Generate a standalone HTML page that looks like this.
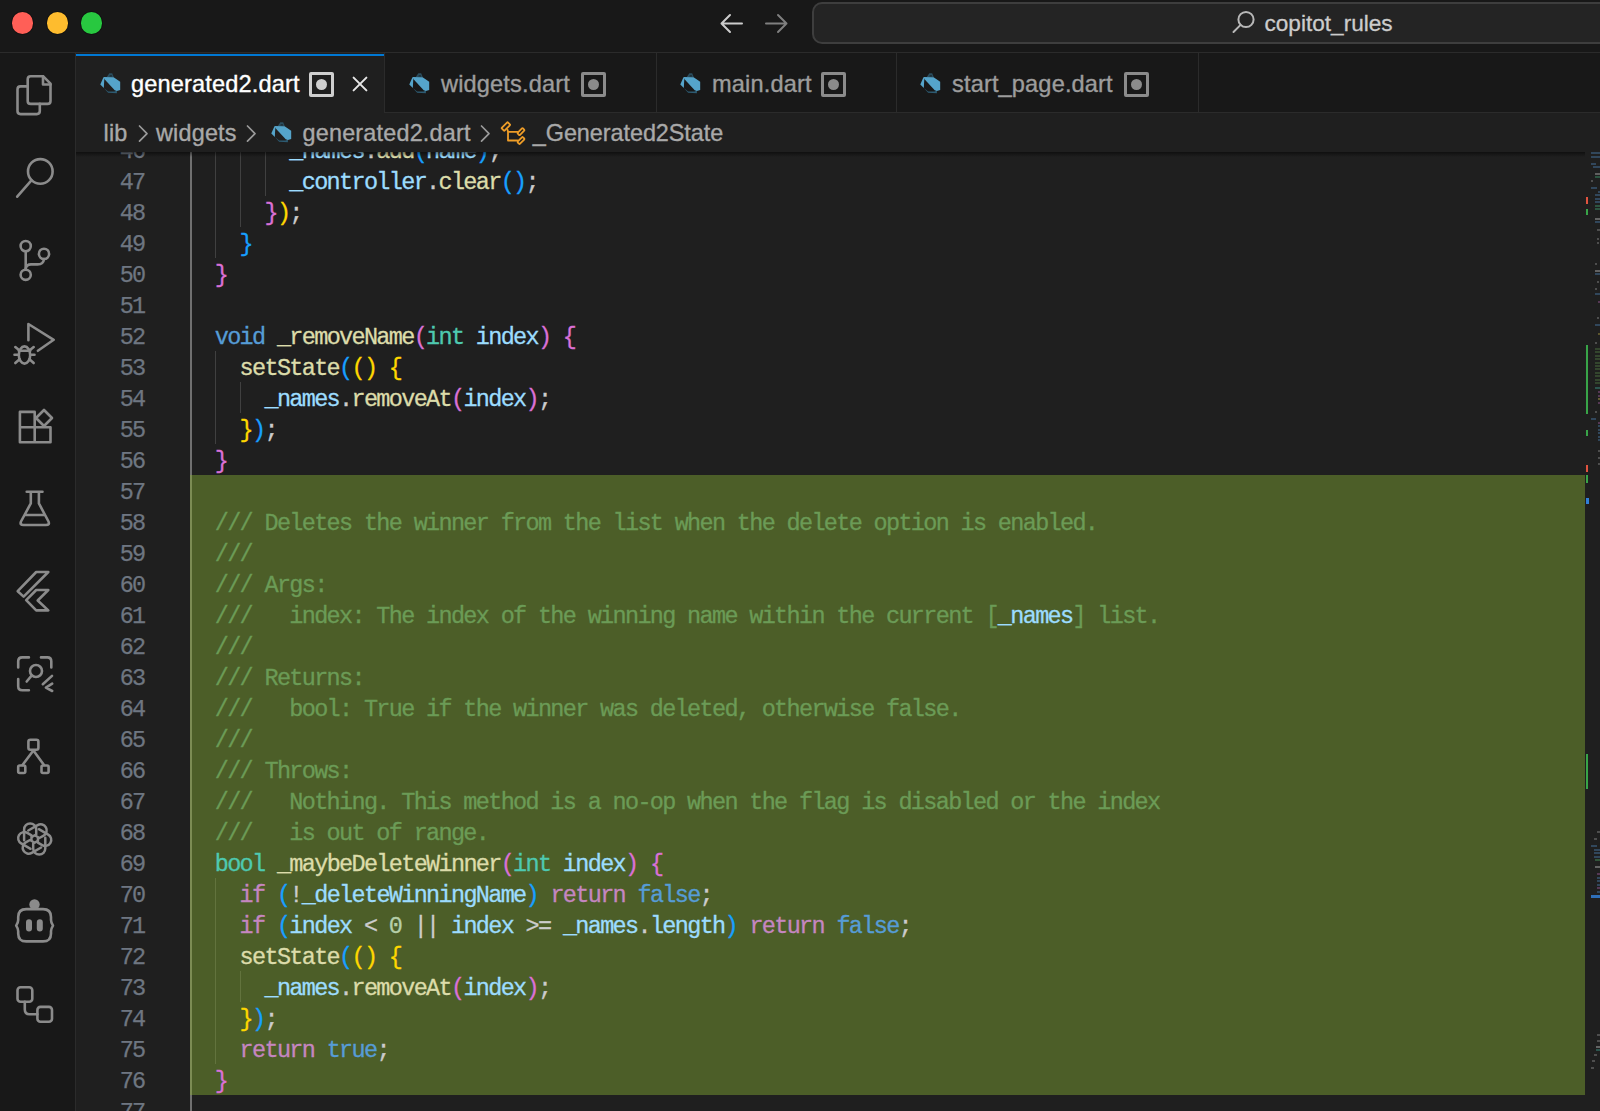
<!DOCTYPE html>
<html><head><meta charset="utf-8"><style>
*{margin:0;padding:0;box-sizing:border-box}
html,body{width:1600px;height:1111px;overflow:hidden;background:#1f1f1f}
body{position:relative;font-family:"Liberation Sans",sans-serif}
.a{position:absolute}
.code{font-family:"Liberation Mono",monospace;font-size:23.50px;letter-spacing:-1.672px;white-space:pre;line-height:31px;height:31px;-webkit-text-stroke:0.3px currentColor}
.ln{font-family:"Liberation Mono",monospace;font-size:23.50px;letter-spacing:-1.672px;white-space:pre;color:#6e7681;text-align:right;width:150px;line-height:31px;height:31px;-webkit-text-stroke:0.25px currentColor}
.kw{color:#569CD6}.ty{color:#4EC9B0}.fn{color:#DCDCAA}.var{color:#9CDCFE}.ctl{color:#C586C0}.p{color:#CCCCCC}
.cm{color:#6A9955}.b1{color:#FFD700}.b2{color:#DA70D6}.b3{color:#179FFF}.num{color:#B5CEA8}
.hl .cm{color:#6b9b56}
.tabt{font-size:23.6px;letter-spacing:0.14px;color:#9d9d9d;white-space:pre;-webkit-text-stroke:0.35px currentColor}
.bc{font-size:23.4px;letter-spacing:0.2px;color:#a9a9a9;white-space:pre;-webkit-text-stroke:0.35px currentColor}
</style></head><body>

<div id="ed"><div class="a" style="left:189.5px;top:475.30px;width:1395.5px;height:619.80px;background:#4c5e28"></div>
<div class="a" style="left:189.50px;top:72.43px;width:2px;height:402.87px;background:#707070"></div>
<div class="a" style="left:189.50px;top:475.30px;width:2px;height:619.80px;background:#7c8c54"></div>
<div class="a" style="left:189.50px;top:1095.10px;width:2px;height:61.98px;background:#707070"></div>
<div class="a" style="left:214.86px;top:72.43px;width:1.5px;height:185.94px;background:#404040"></div>
<div class="a" style="left:239.72px;top:72.43px;width:1.5px;height:154.95px;background:#404040"></div>
<div class="a" style="left:264.58px;top:72.43px;width:1.5px;height:123.96px;background:#404040"></div>
<div class="a" style="left:214.86px;top:351.34px;width:1.5px;height:92.97px;background:#404040"></div>
<div class="a" style="left:239.72px;top:382.33px;width:1.5px;height:30.99px;background:#404040"></div>
<div class="a" style="left:214.86px;top:878.17px;width:1.5px;height:185.94px;background:#62733d"></div>
<div class="a" style="left:239.72px;top:971.14px;width:1.5px;height:30.99px;background:#62733d"></div>
<div class="a ln" style="left:-5.5px;top:104.92px">45</div>
<div class="a ln" style="left:-5.5px;top:135.91px">46</div>
<div class="a code" style="left:289.34px;top:135.91px"><span class="var">_names</span><span class="p">.</span><span class="fn">add</span><span class="b3">(</span><span class="var">name</span><span class="b3">)</span><span class="p">;</span></div>
<div class="a ln" style="left:-5.5px;top:166.90px">47</div>
<div class="a code" style="left:289.34px;top:166.90px"><span class="var">_controller</span><span class="p">.</span><span class="fn">clear</span><span class="b3">()</span><span class="p">;</span></div>
<div class="a ln" style="left:-5.5px;top:197.89px">48</div>
<div class="a code" style="left:264.48px;top:197.89px"><span class="b2">}</span><span class="b1">)</span><span class="p">;</span></div>
<div class="a ln" style="left:-5.5px;top:228.88px">49</div>
<div class="a code" style="left:239.62px;top:228.88px"><span class="b3">}</span></div>
<div class="a ln" style="left:-5.5px;top:259.87px">50</div>
<div class="a code" style="left:214.76px;top:259.87px"><span class="b2">}</span></div>
<div class="a ln" style="left:-5.5px;top:290.86px">51</div>
<div class="a code" style="left:189.90px;top:290.86px"></div>
<div class="a ln" style="left:-5.5px;top:321.85px">52</div>
<div class="a code" style="left:214.76px;top:321.85px"><span class="kw">void</span><span class="p"> </span><span class="fn">_removeName</span><span class="b2">(</span><span class="ty">int</span><span class="p"> </span><span class="var">index</span><span class="b2">)</span><span class="p"> </span><span class="b2">{</span></div>
<div class="a ln" style="left:-5.5px;top:352.84px">53</div>
<div class="a code" style="left:239.62px;top:352.84px"><span class="fn">setState</span><span class="b3">(</span><span class="b1">()</span><span class="p"> </span><span class="b1">{</span></div>
<div class="a ln" style="left:-5.5px;top:383.83px">54</div>
<div class="a code" style="left:264.48px;top:383.83px"><span class="var">_names</span><span class="p">.</span><span class="fn">removeAt</span><span class="b2">(</span><span class="var">index</span><span class="b2">)</span><span class="p">;</span></div>
<div class="a ln" style="left:-5.5px;top:414.82px">55</div>
<div class="a code" style="left:239.62px;top:414.82px"><span class="b1">}</span><span class="b3">)</span><span class="p">;</span></div>
<div class="a ln" style="left:-5.5px;top:445.81px">56</div>
<div class="a code" style="left:214.76px;top:445.81px"><span class="b2">}</span></div>
<div class="a ln" style="left:-5.5px;top:476.80px">57</div>
<div class="a code hl" style="left:189.90px;top:476.80px"></div>
<div class="a ln" style="left:-5.5px;top:507.79px">58</div>
<div class="a code hl" style="left:214.76px;top:507.79px"><span class="cm">/// Deletes the winner from the list when the delete option is enabled.</span></div>
<div class="a ln" style="left:-5.5px;top:538.78px">59</div>
<div class="a code hl" style="left:214.76px;top:538.78px"><span class="cm">///</span></div>
<div class="a ln" style="left:-5.5px;top:569.77px">60</div>
<div class="a code hl" style="left:214.76px;top:569.77px"><span class="cm">/// Args:</span></div>
<div class="a ln" style="left:-5.5px;top:600.76px">61</div>
<div class="a code hl" style="left:214.76px;top:600.76px"><span class="cm">///   index: The index of the winning name within the current [</span><span class="var">_names</span><span class="cm">] list.</span></div>
<div class="a ln" style="left:-5.5px;top:631.75px">62</div>
<div class="a code hl" style="left:214.76px;top:631.75px"><span class="cm">///</span></div>
<div class="a ln" style="left:-5.5px;top:662.74px">63</div>
<div class="a code hl" style="left:214.76px;top:662.74px"><span class="cm">/// Returns:</span></div>
<div class="a ln" style="left:-5.5px;top:693.73px">64</div>
<div class="a code hl" style="left:214.76px;top:693.73px"><span class="cm">///   bool: True if the winner was deleted, otherwise false.</span></div>
<div class="a ln" style="left:-5.5px;top:724.72px">65</div>
<div class="a code hl" style="left:214.76px;top:724.72px"><span class="cm">///</span></div>
<div class="a ln" style="left:-5.5px;top:755.71px">66</div>
<div class="a code hl" style="left:214.76px;top:755.71px"><span class="cm">/// Throws:</span></div>
<div class="a ln" style="left:-5.5px;top:786.70px">67</div>
<div class="a code hl" style="left:214.76px;top:786.70px"><span class="cm">///   Nothing. This method is a no-op when the flag is disabled or the index</span></div>
<div class="a ln" style="left:-5.5px;top:817.69px">68</div>
<div class="a code hl" style="left:214.76px;top:817.69px"><span class="cm">///   is out of range.</span></div>
<div class="a ln" style="left:-5.5px;top:848.68px">69</div>
<div class="a code hl" style="left:214.76px;top:848.68px"><span class="ty">bool</span><span class="p"> </span><span class="fn">_maybeDeleteWinner</span><span class="b2">(</span><span class="ty">int</span><span class="p"> </span><span class="var">index</span><span class="b2">)</span><span class="p"> </span><span class="b2">{</span></div>
<div class="a ln" style="left:-5.5px;top:879.67px">70</div>
<div class="a code hl" style="left:239.62px;top:879.67px"><span class="ctl">if</span><span class="p"> </span><span class="b3">(</span><span class="p">!</span><span class="var">_deleteWinningName</span><span class="b3">)</span><span class="p"> </span><span class="ctl">return</span><span class="p"> </span><span class="kw">false</span><span class="p">;</span></div>
<div class="a ln" style="left:-5.5px;top:910.66px">71</div>
<div class="a code hl" style="left:239.62px;top:910.66px"><span class="ctl">if</span><span class="p"> </span><span class="b3">(</span><span class="var">index</span><span class="p"> &lt; </span><span class="num">0</span><span class="p"> || </span><span class="var">index</span><span class="p"> &gt;= </span><span class="var">_names</span><span class="p">.</span><span class="var">length</span><span class="b3">)</span><span class="p"> </span><span class="ctl">return</span><span class="p"> </span><span class="kw">false</span><span class="p">;</span></div>
<div class="a ln" style="left:-5.5px;top:941.65px">72</div>
<div class="a code hl" style="left:239.62px;top:941.65px"><span class="fn">setState</span><span class="b3">(</span><span class="b1">()</span><span class="p"> </span><span class="b1">{</span></div>
<div class="a ln" style="left:-5.5px;top:972.64px">73</div>
<div class="a code hl" style="left:264.48px;top:972.64px"><span class="var">_names</span><span class="p">.</span><span class="fn">removeAt</span><span class="b2">(</span><span class="var">index</span><span class="b2">)</span><span class="p">;</span></div>
<div class="a ln" style="left:-5.5px;top:1003.63px">74</div>
<div class="a code hl" style="left:239.62px;top:1003.63px"><span class="b1">}</span><span class="b3">)</span><span class="p">;</span></div>
<div class="a ln" style="left:-5.5px;top:1034.62px">75</div>
<div class="a code hl" style="left:239.62px;top:1034.62px"><span class="ctl">return</span><span class="p"> </span><span class="kw">true</span><span class="p">;</span></div>
<div class="a ln" style="left:-5.5px;top:1065.61px">76</div>
<div class="a code hl" style="left:214.76px;top:1065.61px"><span class="b2">}</span></div>
<div class="a ln" style="left:-5.5px;top:1096.60px">77</div>
<div class="a ln" style="left:-5.5px;top:1127.59px">78</div></div>
<div class="a" style="left:0;top:0;width:1600px;height:53px;background:#181818;border-bottom:1px solid #2b2b2b"></div>
<div class="a" style="left:12.0px;top:12.4px;width:21.4px;height:21.4px;border-radius:50%;background:#ff5f57;box-shadow:0 0 0 0.8px rgba(0,0,0,.35)"></div>
<div class="a" style="left:46.5px;top:12.4px;width:21.4px;height:21.4px;border-radius:50%;background:#febc2e;box-shadow:0 0 0 0.8px rgba(0,0,0,.35)"></div>
<div class="a" style="left:80.8px;top:12.4px;width:21.4px;height:21.4px;border-radius:50%;background:#28c840;box-shadow:0 0 0 0.8px rgba(0,0,0,.35)"></div>
<svg class="a" style="left:716px;top:10px" width="76" height="28" viewBox="0 0 76 28"><path d="M26 13.5 H5.5 M14 5 L5.5 13.5 L14 22" stroke="#cccccc" stroke-width="2" fill="none" stroke-linecap="round" stroke-linejoin="round"/><path d="M50 13.5 H70.5 M62 5 L70.5 13.5 L62 22" stroke="#7f7f7f" stroke-width="2" fill="none" stroke-linecap="round" stroke-linejoin="round"/></svg>
<div class="a" style="left:811.7px;top:2px;width:900px;height:41.5px;background:#242424;border:2px solid #3e3e3e;border-radius:10px"></div>
<svg class="a" style="left:1230px;top:9px" width="28" height="26" viewBox="0 0 28 26"><circle cx="16" cy="10.5" r="7.6" stroke="#b8b8b8" stroke-width="2" fill="none"/><path d="M10.6 15.9 L3.5 23" stroke="#b8b8b8" stroke-width="2" stroke-linecap="round"/></svg>
<div class="a" style="left:1264.5px;top:9px;font-size:22.6px;color:#cccccc;line-height:30px;white-space:pre;-webkit-text-stroke:0.3px currentColor">copitot_rules</div>
<div class="a" style="left:0;top:53px;width:76px;height:1058px;background:#181818;border-right:1px solid #2b2b2b"></div>
<svg class="a" style="left:0;top:0" width="76" height="1111" viewBox="0 0 76 1111">
<g stroke="#8b8b8b" stroke-width="2.6" fill="none" stroke-linejoin="round" stroke-linecap="round">
<path d="M30.7 76.2 H43 L50.5 83.7 V100.9 Q50.5 103.9 47.5 103.9 H30.7 Q27.7 103.9 27.7 100.9 V79.2 Q27.7 76.2 30.7 76.2 Z"/>
<path d="M43 76.2 V84.5 H50.5"/>
<path d="M27.7 86.4 H20.5 Q17.5 86.4 17.5 89.4 V111.1 Q17.5 114.1 20.5 114.1 H36.8 Q39.8 114.1 39.8 111.1 V103.9"/>
<circle cx="40.3" cy="171.4" r="12.3"/>
<path d="M31.4 180.3 L17.2 196.7"/>
<circle cx="25.7" cy="246.1" r="5.1"/><circle cx="25.7" cy="274.8" r="5.1"/><circle cx="44" cy="253.9" r="5.1"/>
<path d="M25.7 251.2 V269.7"/>
<path d="M25.7 268.5 Q26.5 264.4 31 264.4 H37.5 Q43.5 264.4 44 259"/>
<path d="M28.4 340.3 V324 L53.7 339.8 L37.9 350.8"/>
<ellipse cx="24.5" cy="355" rx="5.7" ry="8.6"/>
<path d="M18.8 350.8 H30.2"/>
<path d="M15.3 347.1 L19.6 350.6 M14.5 354.8 H18.8 M15.3 363 L19.6 359.2 M33.7 347.1 L29.4 350.6 M34.5 354.8 H30.2 M33.7 363 L29.4 359.2"/>
<path d="M19.9 411.9 H34.7 V442.3 H19.9 Z M19.9 427.2 H50.5 V442.3 H34.7"/>
<path d="M44 410 L52 418 L44 426 L36 418 Z"/>
<path d="M26.7 491.7 H42.5 M30.8 491.7 V503.4 L21 521.5 Q19.5 525 23.5 525 H46 Q50 525 48.5 521.5 L38.9 503.4 V491.7 M25.8 515 H44"/>
<path d="M17.7 591.2 L36.2 572 H48.3 L23.6 596.6 Z"/>
<path d="M26.2 600.2 L36.2 590 H48.3 L37.7 600.5 L48.3 610.4 H36.2 Z"/>
<path d="M18.2 667.4 V661.4 Q18.2 657.4 22.2 657.4 H28.9 M41 657.4 H47.3 Q51.3 657.4 51.3 661.4 V667.4 M18.2 679 V686.2 Q18.2 690.2 22.2 690.2 H28.9"/>
<circle cx="36" cy="671" r="6"/>
<path d="M31.6 675.6 L26.7 681.5 M42.8 684.2 L52 675.9 M52.2 683.7 L45.9 687.6 L52.2 691"/>
<rect x="28.4" y="739.7" width="10" height="10" rx="2"/>
<rect x="18.2" y="765.5" width="7.1" height="7.5" rx="1.5"/>
<rect x="41.5" y="765.5" width="7.1" height="7.5" rx="1.5"/>
<path d="M33.4 750.5 L22.5 765 M33.4 750.5 L44 765"/>
<g stroke-width="2.3"><path d="M -9.8 1.2 V -8.8 A 5.6 5.6 0 0 1 1.4 -8.8 V -4.2 L -2.2 -2.2" transform="translate(34.7 839) scale(1.08) rotate(0)"/><path d="M -9.8 1.2 V -8.8 A 5.6 5.6 0 0 1 1.4 -8.8 V -4.2 L -2.2 -2.2" transform="translate(34.7 839) scale(1.08) rotate(60)"/><path d="M -9.8 1.2 V -8.8 A 5.6 5.6 0 0 1 1.4 -8.8 V -4.2 L -2.2 -2.2" transform="translate(34.7 839) scale(1.08) rotate(120)"/><path d="M -9.8 1.2 V -8.8 A 5.6 5.6 0 0 1 1.4 -8.8 V -4.2 L -2.2 -2.2" transform="translate(34.7 839) scale(1.08) rotate(180)"/><path d="M -9.8 1.2 V -8.8 A 5.6 5.6 0 0 1 1.4 -8.8 V -4.2 L -2.2 -2.2" transform="translate(34.7 839) scale(1.08) rotate(240)"/><path d="M -9.8 1.2 V -8.8 A 5.6 5.6 0 0 1 1.4 -8.8 V -4.2 L -2.2 -2.2" transform="translate(34.7 839) scale(1.08) rotate(300)"/></g>
<path d="M26.2 909.1 H43 Q51 909.1 51 917.1 V920 Q51 922.5 53 925.6 Q51 928.7 51 931.2 V933.4 Q51 941.4 43 941.4 H26.2 Q18.2 941.4 18.2 933.4 V931.2 Q18.2 928.7 16.2 925.6 Q18.2 922.5 18.2 920 V917.1 Q18.2 909.1 26.2 909.1 Z"/>
<path d="M29 922.3 V928.4 M39.8 922.3 V928.4" stroke-width="6"/>
<rect x="17.5" y="987.2" width="14.8" height="14.6" rx="3"/>
<rect x="37.4" y="1006.9" width="14.6" height="14.8" rx="3"/>
<path d="M24.8 1001.8 V1009.5 Q24.8 1014.2 29.5 1014.2 H37.4"/>
</g>
<circle cx="34.5" cy="904.5" r="5.2" fill="#8b8b8b"/>
</svg>
<div class="a" style="left:76px;top:53px;width:1524px;height:60px;background:#181818;border-bottom:1px solid #2b2b2b"></div>
<div class="a" style="left:76px;top:53px;width:309px;height:60px;background:#1f1f1f;border-right:1px solid #2b2b2b"></div>
<div class="a" style="left:76px;top:53.5px;width:308px;height:2.5px;background:#0078d4"></div>
<div class="a" style="left:655.9px;top:53px;width:1px;height:60px;background:#2b2b2b"></div>
<div class="a" style="left:895.8px;top:53px;width:1px;height:60px;background:#2b2b2b"></div>
<div class="a" style="left:1198.3px;top:53px;width:1px;height:60px;background:#2b2b2b"></div>
<svg class="a" style="left:96px;top:70px" width="26" height="26" viewBox="0 0 26 26"><path d="M13.3 3.2 L16.2 3.2 L17.8 7.2 L10.8 6.9 Z" fill="#2a4d5e"/><path d="M13.8 5.2 L15.8 5.2 L16.2 6.4 L13.4 6.4 Z" fill="#1d2a30"/><path d="M7.8 18.1 L12.1 22.8 L20.9 23.2 L20.9 20.6 L18.7 21.4 L12.1 21.4 Z" fill="#2d5b72"/><path d="M7.6 7.1 L8.3 9.1 L7.8 18.1 L4.3 14.6 Z" fill="#55a4ca"/><path d="M7.6 7.1 L17.6 7.2 L24.2 11.8 L24.2 19.9 L20.9 20.9 L18.7 20.3 L8.3 9.1 Z" fill="#55a4ca"/></svg>
<div class="a tabt" style="left:131px;top:69px;line-height:30px;color:#ffffff">generated2.dart</div>
<div class="a" style="left:309px;top:71.5px;width:25px;height:25px;border:3px solid #cfcfcf;border-radius:2px"></div><div class="a" style="left:316px;top:78.5px;width:11px;height:11px;border-radius:50%;background:#cfcfcf"></div>
<svg class="a" style="left:404.6px;top:70px" width="26" height="26" viewBox="0 0 26 26"><path d="M13.3 3.2 L16.2 3.2 L17.8 7.2 L10.8 6.9 Z" fill="#2a4d5e"/><path d="M13.8 5.2 L15.8 5.2 L16.2 6.4 L13.4 6.4 Z" fill="#1d2a30"/><path d="M7.8 18.1 L12.1 22.8 L20.9 23.2 L20.9 20.6 L18.7 21.4 L12.1 21.4 Z" fill="#2d5b72"/><path d="M7.6 7.1 L8.3 9.1 L7.8 18.1 L4.3 14.6 Z" fill="#55a4ca"/><path d="M7.6 7.1 L17.6 7.2 L24.2 11.8 L24.2 19.9 L20.9 20.9 L18.7 20.3 L8.3 9.1 Z" fill="#55a4ca"/></svg>
<div class="a tabt" style="left:441px;top:69px;line-height:30px;color:#9d9d9d">widgets.dart</div>
<div class="a" style="left:581px;top:71.5px;width:25px;height:25px;border:3px solid #8b8b8b;border-radius:2px"></div><div class="a" style="left:588px;top:78.5px;width:11px;height:11px;border-radius:50%;background:#8b8b8b"></div>
<svg class="a" style="left:676.3px;top:70px" width="26" height="26" viewBox="0 0 26 26"><path d="M13.3 3.2 L16.2 3.2 L17.8 7.2 L10.8 6.9 Z" fill="#2a4d5e"/><path d="M13.8 5.2 L15.8 5.2 L16.2 6.4 L13.4 6.4 Z" fill="#1d2a30"/><path d="M7.8 18.1 L12.1 22.8 L20.9 23.2 L20.9 20.6 L18.7 21.4 L12.1 21.4 Z" fill="#2d5b72"/><path d="M7.6 7.1 L8.3 9.1 L7.8 18.1 L4.3 14.6 Z" fill="#55a4ca"/><path d="M7.6 7.1 L17.6 7.2 L24.2 11.8 L24.2 19.9 L20.9 20.9 L18.7 20.3 L8.3 9.1 Z" fill="#55a4ca"/></svg>
<div class="a tabt" style="left:712px;top:69px;line-height:30px;color:#9d9d9d">main.dart</div>
<div class="a" style="left:820.5px;top:71.5px;width:25px;height:25px;border:3px solid #8b8b8b;border-radius:2px"></div><div class="a" style="left:827.5px;top:78.5px;width:11px;height:11px;border-radius:50%;background:#8b8b8b"></div>
<svg class="a" style="left:915.6px;top:70px" width="26" height="26" viewBox="0 0 26 26"><path d="M13.3 3.2 L16.2 3.2 L17.8 7.2 L10.8 6.9 Z" fill="#2a4d5e"/><path d="M13.8 5.2 L15.8 5.2 L16.2 6.4 L13.4 6.4 Z" fill="#1d2a30"/><path d="M7.8 18.1 L12.1 22.8 L20.9 23.2 L20.9 20.6 L18.7 21.4 L12.1 21.4 Z" fill="#2d5b72"/><path d="M7.6 7.1 L8.3 9.1 L7.8 18.1 L4.3 14.6 Z" fill="#55a4ca"/><path d="M7.6 7.1 L17.6 7.2 L24.2 11.8 L24.2 19.9 L20.9 20.9 L18.7 20.3 L8.3 9.1 Z" fill="#55a4ca"/></svg>
<div class="a tabt" style="left:952px;top:69px;line-height:30px;color:#9d9d9d">start_page.dart</div>
<div class="a" style="left:1123.5px;top:71.5px;width:25px;height:25px;border:3px solid #8b8b8b;border-radius:2px"></div><div class="a" style="left:1130.5px;top:78.5px;width:11px;height:11px;border-radius:50%;background:#8b8b8b"></div>
<svg class="a" style="left:350px;top:74px" width="20" height="20" viewBox="0 0 20 20"><path d="M3.6 3.6 L16.4 16.4 M16.4 3.6 L3.6 16.4" stroke="#e6e6e6" stroke-width="2" stroke-linecap="round"/></svg>
<div class="a" style="left:76px;top:113px;width:1524px;height:39px;background:#1f1f1f"></div>
<div class="a" style="left:76px;top:152px;width:1509px;height:5px;background:linear-gradient(rgba(0,0,0,.5),rgba(0,0,0,0))"></div>
<div class="a bc" style="left:103.5px;top:118px;line-height:30px">lib</div>
<svg class="a" style="left:136.5px;top:123.5px" width="12" height="20" viewBox="0 0 12 20"><path d="M2.5 2 L10 9.6 L2.5 17.2" stroke="#9a9a9a" stroke-width="1.7" fill="none" stroke-linecap="round" stroke-linejoin="round"/></svg>
<div class="a bc" style="left:156px;top:118px;line-height:30px">widgets</div>
<svg class="a" style="left:244.5px;top:123.5px" width="12" height="20" viewBox="0 0 12 20"><path d="M2.5 2 L10 9.6 L2.5 17.2" stroke="#9a9a9a" stroke-width="1.7" fill="none" stroke-linecap="round" stroke-linejoin="round"/></svg>
<svg class="a" style="left:266.9px;top:119.2px" width="26" height="26" viewBox="0 0 26 26"><path d="M13.3 3.2 L16.2 3.2 L17.8 7.2 L10.8 6.9 Z" fill="#2a4d5e"/><path d="M13.8 5.2 L15.8 5.2 L16.2 6.4 L13.4 6.4 Z" fill="#1d2a30"/><path d="M7.8 18.1 L12.1 22.8 L20.9 23.2 L20.9 20.6 L18.7 21.4 L12.1 21.4 Z" fill="#2d5b72"/><path d="M7.6 7.1 L8.3 9.1 L7.8 18.1 L4.3 14.6 Z" fill="#55a4ca"/><path d="M7.6 7.1 L17.6 7.2 L24.2 11.8 L24.2 19.9 L20.9 20.9 L18.7 20.3 L8.3 9.1 Z" fill="#55a4ca"/></svg>
<div class="a bc" style="left:302.5px;top:118px;line-height:30px">generated2.dart</div>
<svg class="a" style="left:478.5px;top:123.5px" width="12" height="20" viewBox="0 0 12 20"><path d="M2.5 2 L10 9.6 L2.5 17.2" stroke="#9a9a9a" stroke-width="1.7" fill="none" stroke-linecap="round" stroke-linejoin="round"/></svg>
<svg class="a" style="left:495px;top:116px" width="35" height="34" viewBox="0 0 35 34"><g stroke="#ee9d28" stroke-width="1.8" fill="none" stroke-linejoin="round" stroke-linecap="round"><rect x="6.55" y="8.5" width="8.7" height="4" rx="0.8" transform="rotate(-45 10.9 10.5)"/><rect x="22.3" y="14" width="7.4" height="3.2" rx="0.8" transform="rotate(-45 26 15.6)"/><rect x="22.3" y="22.9" width="7.4" height="3.2" rx="0.8" transform="rotate(-45 26 24.5)"/><path d="M12.6 14 L13 15.8 V24.5 H22.5 M13 15.8 H22.5"/></g></svg>
<div class="a bc" style="left:532.8px;top:118px;line-height:30px;letter-spacing:-0.05px">_Generated2State</div>
<div class="a" style="left:1585.7px;top:196.7px;width:2.5px;height:7.0px;background:#e0533f"></div>
<div class="a" style="left:1585.7px;top:209px;width:2.5px;height:5.5px;background:#38a448"></div>
<div class="a" style="left:1585.7px;top:344.7px;width:2.5px;height:69.3px;background:#38a448"></div>
<div class="a" style="left:1585.7px;top:430px;width:2.5px;height:5.5px;background:#38a448"></div>
<div class="a" style="left:1585.7px;top:465px;width:2.5px;height:7.0px;background:#e0533f"></div>
<div class="a" style="left:1585.7px;top:475px;width:2.5px;height:8.0px;background:#38a448"></div>
<div class="a" style="left:1585.7px;top:754px;width:2.5px;height:35.4px;background:#38a448"></div>
<div class="a" style="left:1591px;top:152.4px;width:9px;height:2px;background:#4a7fb0;opacity:.42"></div>
<div class="a" style="left:1591px;top:155.6px;width:9px;height:2px;background:#4a7fb0;opacity:.42"></div>
<div class="a" style="left:1591px;top:162.5px;width:5px;height:2px;background:#4a7fb0;opacity:.42"></div>
<div class="a" style="left:1593px;top:165.8px;width:7px;height:2px;background:#4a7fb0;opacity:.42"></div>
<div class="a" style="left:1595px;top:172.7px;width:5px;height:2px;background:#b8b8b8;opacity:.42"></div>
<div class="a" style="left:1595px;top:175.9px;width:5px;height:2px;background:#3f9f6f;opacity:.42"></div>
<div class="a" style="left:1591px;top:180px;width:2px;height:2px;background:#909090;opacity:.42"></div>
<div class="a" style="left:1591px;top:187px;width:6px;height:2px;background:#4a7fb0;opacity:.42"></div>
<div class="a" style="left:1598px;top:190.5px;width:2px;height:2px;background:#4a7fb0;opacity:.42"></div>
<div class="a" style="left:1595px;top:194px;width:5px;height:2px;background:#4a7fb0;opacity:.42"></div>
<div class="a" style="left:1595px;top:197.5px;width:5px;height:2px;background:#4a7fb0;opacity:.42"></div>
<div class="a" style="left:1595px;top:201px;width:5px;height:2px;background:#4a7fb0;opacity:.42"></div>
<div class="a" style="left:1595px;top:204.5px;width:5px;height:2px;background:#3f9f6f;opacity:.42"></div>
<div class="a" style="left:1595px;top:208px;width:5px;height:2px;background:#3f9f6f;opacity:.42"></div>
<div class="a" style="left:1595px;top:218px;width:5px;height:2px;background:#c0c0c0;opacity:.42"></div>
<div class="a" style="left:1595px;top:221.3px;width:5px;height:2px;background:#4a7fb0;opacity:.42"></div>
<div class="a" style="left:1597px;top:228.5px;width:3px;height:2px;background:#909090;opacity:.42"></div>
<div class="a" style="left:1597px;top:238px;width:2px;height:2px;background:#909090;opacity:.42"></div>
<div class="a" style="left:1597px;top:242px;width:2px;height:2px;background:#909090;opacity:.42"></div>
<div class="a" style="left:1595px;top:262.6px;width:2px;height:2px;background:#909090;opacity:.42"></div>
<div class="a" style="left:1595px;top:270px;width:5px;height:2px;background:#c0c0c0;opacity:.42"></div>
<div class="a" style="left:1595px;top:273.3px;width:5px;height:2px;background:#4a7fb0;opacity:.42"></div>
<div class="a" style="left:1597px;top:281px;width:2px;height:2px;background:#909090;opacity:.42"></div>
<div class="a" style="left:1595px;top:288px;width:2px;height:2px;background:#909090;opacity:.42"></div>
<div class="a" style="left:1595px;top:293px;width:5px;height:2px;background:#4a7fb0;opacity:.42"></div>
<div class="a" style="left:1598px;top:300.5px;width:2px;height:2px;background:#a25aa0;opacity:.42"></div>
<div class="a" style="left:1597px;top:317px;width:2px;height:2px;background:#909090;opacity:.42"></div>
<div class="a" style="left:1595px;top:323.5px;width:5px;height:2px;background:#4a7fb0;opacity:.42"></div>
<div class="a" style="left:1598px;top:333px;width:2px;height:2px;background:#b0a040;opacity:.42"></div>
<div class="a" style="left:1595px;top:341.5px;width:2px;height:2px;background:#909090;opacity:.42"></div>
<div class="a" style="left:1595px;top:348.0px;width:5px;height:2px;background:#4f7a40;opacity:.42"></div>
<div class="a" style="left:1595px;top:351.4px;width:5px;height:2px;background:#4f7a40;opacity:.42"></div>
<div class="a" style="left:1595px;top:354.8px;width:5px;height:2px;background:#4f7a40;opacity:.42"></div>
<div class="a" style="left:1595px;top:358.2px;width:5px;height:2px;background:#4f7a40;opacity:.42"></div>
<div class="a" style="left:1595px;top:361.6px;width:5px;height:2px;background:#4f7a40;opacity:.42"></div>
<div class="a" style="left:1595px;top:365.0px;width:5px;height:2px;background:#4f7a40;opacity:.42"></div>
<div class="a" style="left:1595px;top:368.4px;width:5px;height:2px;background:#4f7a40;opacity:.42"></div>
<div class="a" style="left:1595px;top:371.8px;width:5px;height:2px;background:#4f7a40;opacity:.42"></div>
<div class="a" style="left:1595px;top:375.2px;width:5px;height:2px;background:#4f7a40;opacity:.42"></div>
<div class="a" style="left:1595px;top:378.6px;width:5px;height:2px;background:#4f7a40;opacity:.42"></div>
<div class="a" style="left:1595px;top:382.0px;width:5px;height:2px;background:#4f7a40;opacity:.42"></div>
<div class="a" style="left:1595px;top:386.5px;width:5px;height:2px;background:#3f9f8f;opacity:.42"></div>
<div class="a" style="left:1598px;top:391px;width:2px;height:2px;background:#a25aa0;opacity:.42"></div>
<div class="a" style="left:1598px;top:394.5px;width:2px;height:2px;background:#a25aa0;opacity:.42"></div>
<div class="a" style="left:1598px;top:398px;width:2px;height:2px;background:#c0b050;opacity:.42"></div>
<div class="a" style="left:1598px;top:402px;width:2px;height:2px;background:#a25aa0;opacity:.42"></div>
<div class="a" style="left:1595px;top:411px;width:2px;height:2px;background:#909090;opacity:.42"></div>
<div class="a" style="left:1591px;top:418px;width:5px;height:2px;background:#4a7fb0;opacity:.42"></div>
<div class="a" style="left:1598px;top:421.5px;width:2px;height:2px;background:#a25aa0;opacity:.42"></div>
<div class="a" style="left:1598px;top:425px;width:2px;height:2px;background:#4a7fb0;opacity:.42"></div>
<div class="a" style="left:1598px;top:428.5px;width:2px;height:2px;background:#4a7fb0;opacity:.42"></div>
<div class="a" style="left:1598px;top:432px;width:2px;height:2px;background:#4a7fb0;opacity:.42"></div>
<div class="a" style="left:1598px;top:435.5px;width:2px;height:2px;background:#4a7fb0;opacity:.42"></div>
<div class="a" style="left:1598px;top:439px;width:2px;height:2px;background:#4a7fb0;opacity:.42"></div>
<div class="a" style="left:1598px;top:450px;width:2px;height:2px;background:#909090;opacity:.42"></div>
<div class="a" style="left:1598px;top:457px;width:2px;height:2px;background:#909090;opacity:.42"></div>
<div class="a" style="left:1598px;top:463px;width:2px;height:2px;background:#909090;opacity:.42"></div>
<div class="a" style="left:1597px;top:831px;width:3px;height:2px;background:#909090;opacity:.42"></div>
<div class="a" style="left:1594px;top:838px;width:3px;height:2px;background:#909090;opacity:.42"></div>
<div class="a" style="left:1591px;top:845px;width:6px;height:2px;background:#4a7fb0;opacity:.42"></div>
<div class="a" style="left:1594px;top:848.5px;width:6px;height:2px;background:#4a7fb0;opacity:.42"></div>
<div class="a" style="left:1594px;top:852px;width:6px;height:2px;background:#4a7fb0;opacity:.42"></div>
<div class="a" style="left:1594px;top:855.5px;width:6px;height:2px;background:#4a7fb0;opacity:.42"></div>
<div class="a" style="left:1595px;top:859px;width:5px;height:2px;background:#4f9f5f;opacity:.42"></div>
<div class="a" style="left:1595px;top:866px;width:5px;height:2px;background:#c0c0c0;opacity:.42"></div>
<div class="a" style="left:1597px;top:873px;width:3px;height:2px;background:#a25aa0;opacity:.42"></div>
<div class="a" style="left:1597px;top:876.5px;width:3px;height:2px;background:#4a7fb0;opacity:.42"></div>
<div class="a" style="left:1597px;top:880px;width:3px;height:2px;background:#4a7fb0;opacity:.42"></div>
<div class="a" style="left:1597px;top:883.5px;width:3px;height:2px;background:#4a7fb0;opacity:.42"></div>
<div class="a" style="left:1597px;top:887px;width:3px;height:2px;background:#a25aa0;opacity:.42"></div>
<div class="a" style="left:1597px;top:890.5px;width:3px;height:2px;background:#4a7fb0;opacity:.42"></div>
<div class="a" style="left:1597px;top:1034px;width:3px;height:2px;background:#909090;opacity:.42"></div>
<div class="a" style="left:1597px;top:1040px;width:3px;height:2px;background:#909090;opacity:.42"></div>
<div class="a" style="left:1596px;top:1046px;width:4px;height:2px;background:#c0c0c0;opacity:.42"></div>
<div class="a" style="left:1596px;top:1049px;width:4px;height:2px;background:#3f9f8f;opacity:.42"></div>
<div class="a" style="left:1594px;top:1054px;width:3px;height:2px;background:#909090;opacity:.42"></div>
<div class="a" style="left:1592px;top:1060px;width:3px;height:2px;background:#909090;opacity:.42"></div>
<div class="a" style="left:1591px;top:1067px;width:3px;height:2px;background:#909090;opacity:.42"></div>
<div class="a" style="left:1591px;top:895px;width:9px;height:3px;background:#2f6fb8"></div>
<div class="a" style="left:1585.5px;top:498px;width:3px;height:6px;background:#2f7fd8"></div>
</body></html>
